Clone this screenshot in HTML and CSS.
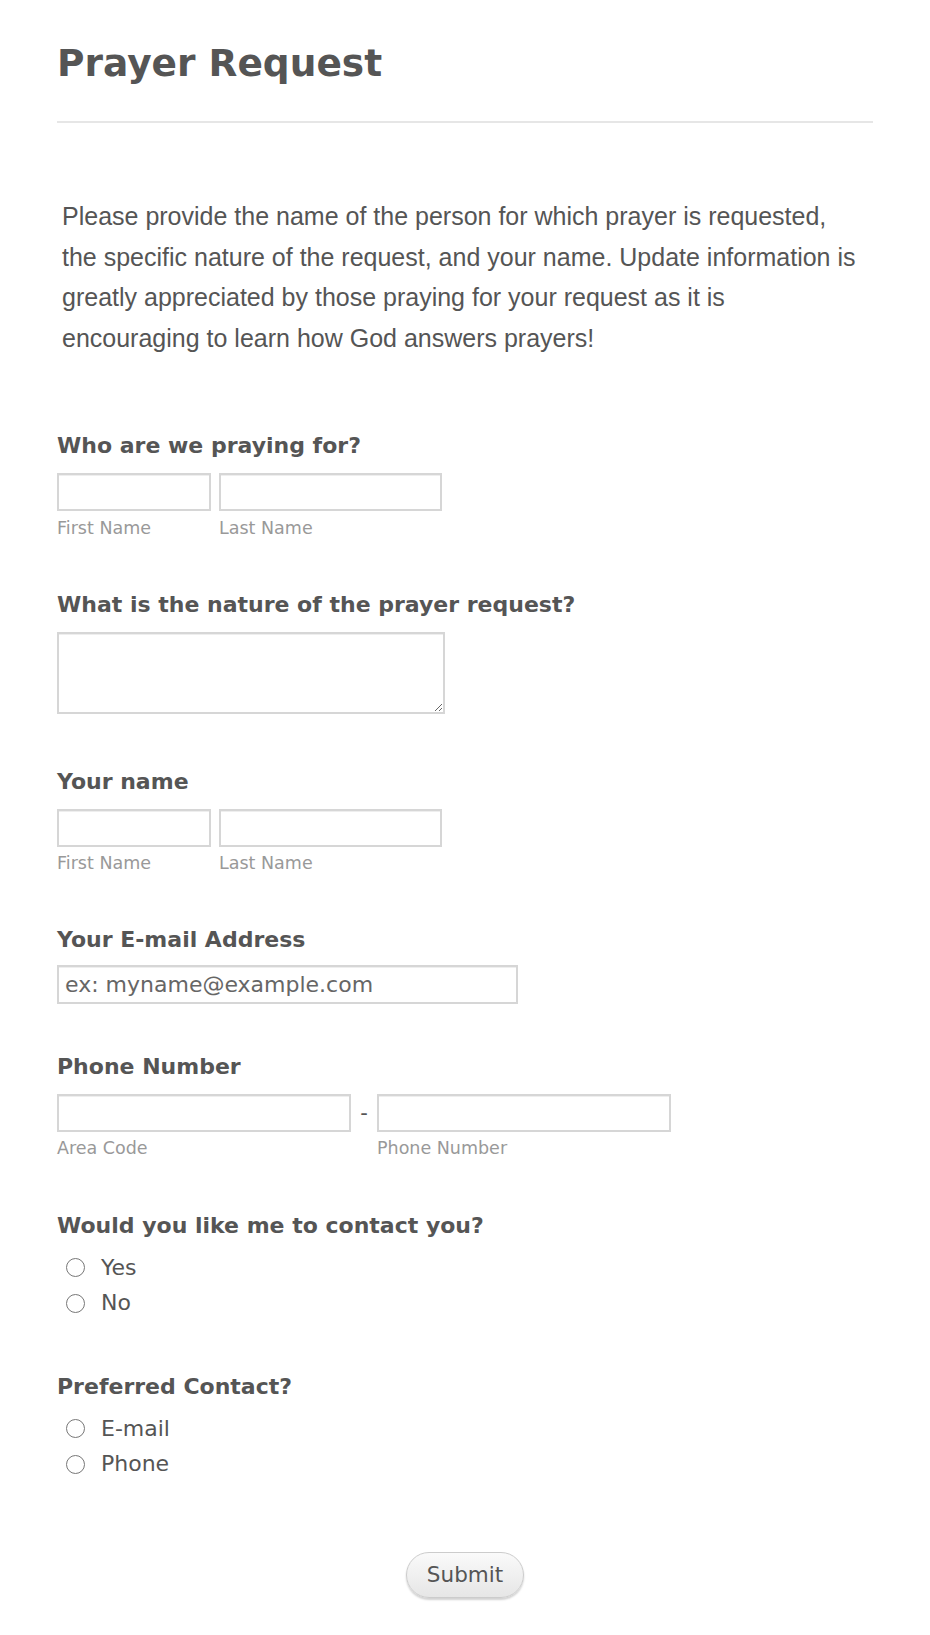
FILE: index.html
```html
<!DOCTYPE html>
<html lang="en">
<head>
<meta charset="utf-8">
<title>Prayer Request</title>
<link rel="stylesheet" href="styles.css">
</head>
<body>
<form class="form">
  <header class="form-header">
    <h1 class="form-title">Prayer Request</h1>
  </header>
  <p class="intro">Please provide the name of the person for which prayer is requested, the specific nature of the request, and your name. Update information is greatly appreciated by those praying for your request as it is encouraging to learn how God answers prayers!</p>

  <div class="field">
    <div class="label">Who are we praying for?</div>
    <div class="name-row">
      <div class="sub-col">
        <input class="input input-first" type="text">
        <span class="sublabel">First Name</span>
      </div>
      <div class="sub-col">
        <input class="input input-last" type="text">
        <span class="sublabel">Last Name</span>
      </div>
    </div>
  </div>

  <div class="field">
    <div class="label">What is the nature of the prayer request?</div>
    <textarea class="textarea"></textarea>
  </div>

  <div class="field">
    <div class="label">Your name</div>
    <div class="name-row">
      <div class="sub-col">
        <input class="input input-first" type="text">
        <span class="sublabel">First Name</span>
      </div>
      <div class="sub-col">
        <input class="input input-last" type="text">
        <span class="sublabel">Last Name</span>
      </div>
    </div>
  </div>

  <div class="field field-email">
    <div class="label label-tight">Your E-mail Address</div>
    <input class="input input-email" type="text" placeholder="ex: myname@example.com">
  </div>

  <div class="field">
    <div class="label">Phone Number</div>
    <div class="phone-row">
      <div class="sub-col">
        <input class="input input-phone" type="text">
        <span class="sublabel">Area Code</span>
      </div>
      <span class="dash">-</span>
      <div class="sub-col">
        <input class="input input-phone" type="text">
        <span class="sublabel">Phone Number</span>
      </div>
    </div>
  </div>

  <div class="field">
    <div class="label">Would you like me to contact you?</div>
    <div class="radio-list">
      <label class="radio"><span class="radio-circle"></span><span class="radio-text">Yes</span></label>
      <label class="radio"><span class="radio-circle"></span><span class="radio-text">No</span></label>
    </div>
  </div>

  <div class="field field-after-radio">
    <div class="label">Preferred Contact?</div>
    <div class="radio-list">
      <label class="radio"><span class="radio-circle"></span><span class="radio-text">E-mail</span></label>
      <label class="radio"><span class="radio-circle"></span><span class="radio-text">Phone</span></label>
    </div>
  </div>

  <div class="actions">
    <button type="button" class="submit">Submit</button>
  </div>
</form>
</body>
</html>
```
FILE: styles.css
```css
html, body {
  margin: 0;
  padding: 0;
  background: #fff;
}

body {
  font-family: "DejaVu Sans", Verdana, sans-serif;
  color: #555;
}

.form {
  padding: 0 57px 0 57px;
  width: 816px;
}

.form-header {
  padding-top: 38px;
  padding-bottom: 33px;
  border-bottom: 2px solid #e6e6e6;
}

.form-title {
  margin: 0;
  font-size: 37.5px;
  line-height: 50px;
  font-weight: bold;
  color: #555;
}

.intro {
  margin: 73px 0 0 0;
  padding-left: 5px;
  font-family: "Liberation Sans", Arial, sans-serif;
  font-size: 25px;
  line-height: 40.6px;
  color: #555;
  width: 806px;
}

.field {
  margin-top: 53.5px;
}

.intro + .field {
  margin-top: 74px;
}

.field.field-email {
  margin-top: 52.5px;
}

.field-email + .field {
  margin-top: 49px;
}

.field.field-after-radio {
  margin-top: 52px;
}

.label {
  font-size: 22px;
  line-height: 28px;
  font-weight: bold;
  color: #555;
  margin-bottom: 13px;
}

.label.label-tight {
  margin-bottom: 11px;
}

.name-row,
.phone-row {
  display: flex;
  align-items: flex-start;
}

.name-row {
  gap: 8px;
}

.sub-col {
  display: flex;
  flex-direction: column;
}

.input {
  box-sizing: border-box;
  height: 38px;
  border: 2px solid #d6d6d6;
  box-shadow: inset 0 1px 0 #eee;
  background: #fff;
  margin: 0;
  padding: 0 6px;
  font-family: "DejaVu Sans", Verdana, sans-serif;
  font-size: 22px;
  color: #555;
  outline: none;
}

.input::placeholder {
  color: #666;
}

.input-first { width: 154px; }
.input-last { width: 223px; }
.input-email { width: 461px; height: 39px; display: block; }
.input-phone { width: 294px; }

.sublabel {
  display: block;
  margin-top: 6.5px;
  font-size: 17.5px;
  line-height: 20px;
  color: #999;
}

.dash {
  width: 26px;
  text-align: center;
  font-size: 21px;
  line-height: 38px;
  color: #555;
}

.textarea {
  display: block;
  box-sizing: border-box;
  width: 388px;
  height: 82px;
  border: 2px solid #d6d6d6;
  box-shadow: inset 0 1px 0 #eee;
  margin: 0;
  padding: 4px;
  resize: both;
  outline: none;
}

.radio-list {
  display: flex;
  flex-direction: column;
  margin-top: -3px;
}

.radio {
  display: flex;
  align-items: center;
  height: 35.5px;
  padding-left: 9px;
}

.radio-circle {
  box-sizing: border-box;
  width: 19px;
  height: 19px;
  border: 1.5px solid #777;
  border-radius: 50%;
  background: #fff;
  margin-right: 16px;
  flex: none;
}

.radio-text {
  font-size: 22px;
  line-height: 28px;
  color: #555;
}

.actions {
  display: flex;
  justify-content: center;
  margin-top: 70px;
  padding-bottom: 40px;
}

.submit {
  box-sizing: border-box;
  width: 118px;
  height: 46px;
  border: 1px solid #ccc;
  border-radius: 23px;
  background: linear-gradient(#fafafa, #e6e6e6);
  box-shadow: 0 2px 2px rgba(0,0,0,0.18);
  font-family: "DejaVu Sans", Verdana, sans-serif;
  font-size: 21.5px;
  color: #555;
  padding: 0;
}
```
